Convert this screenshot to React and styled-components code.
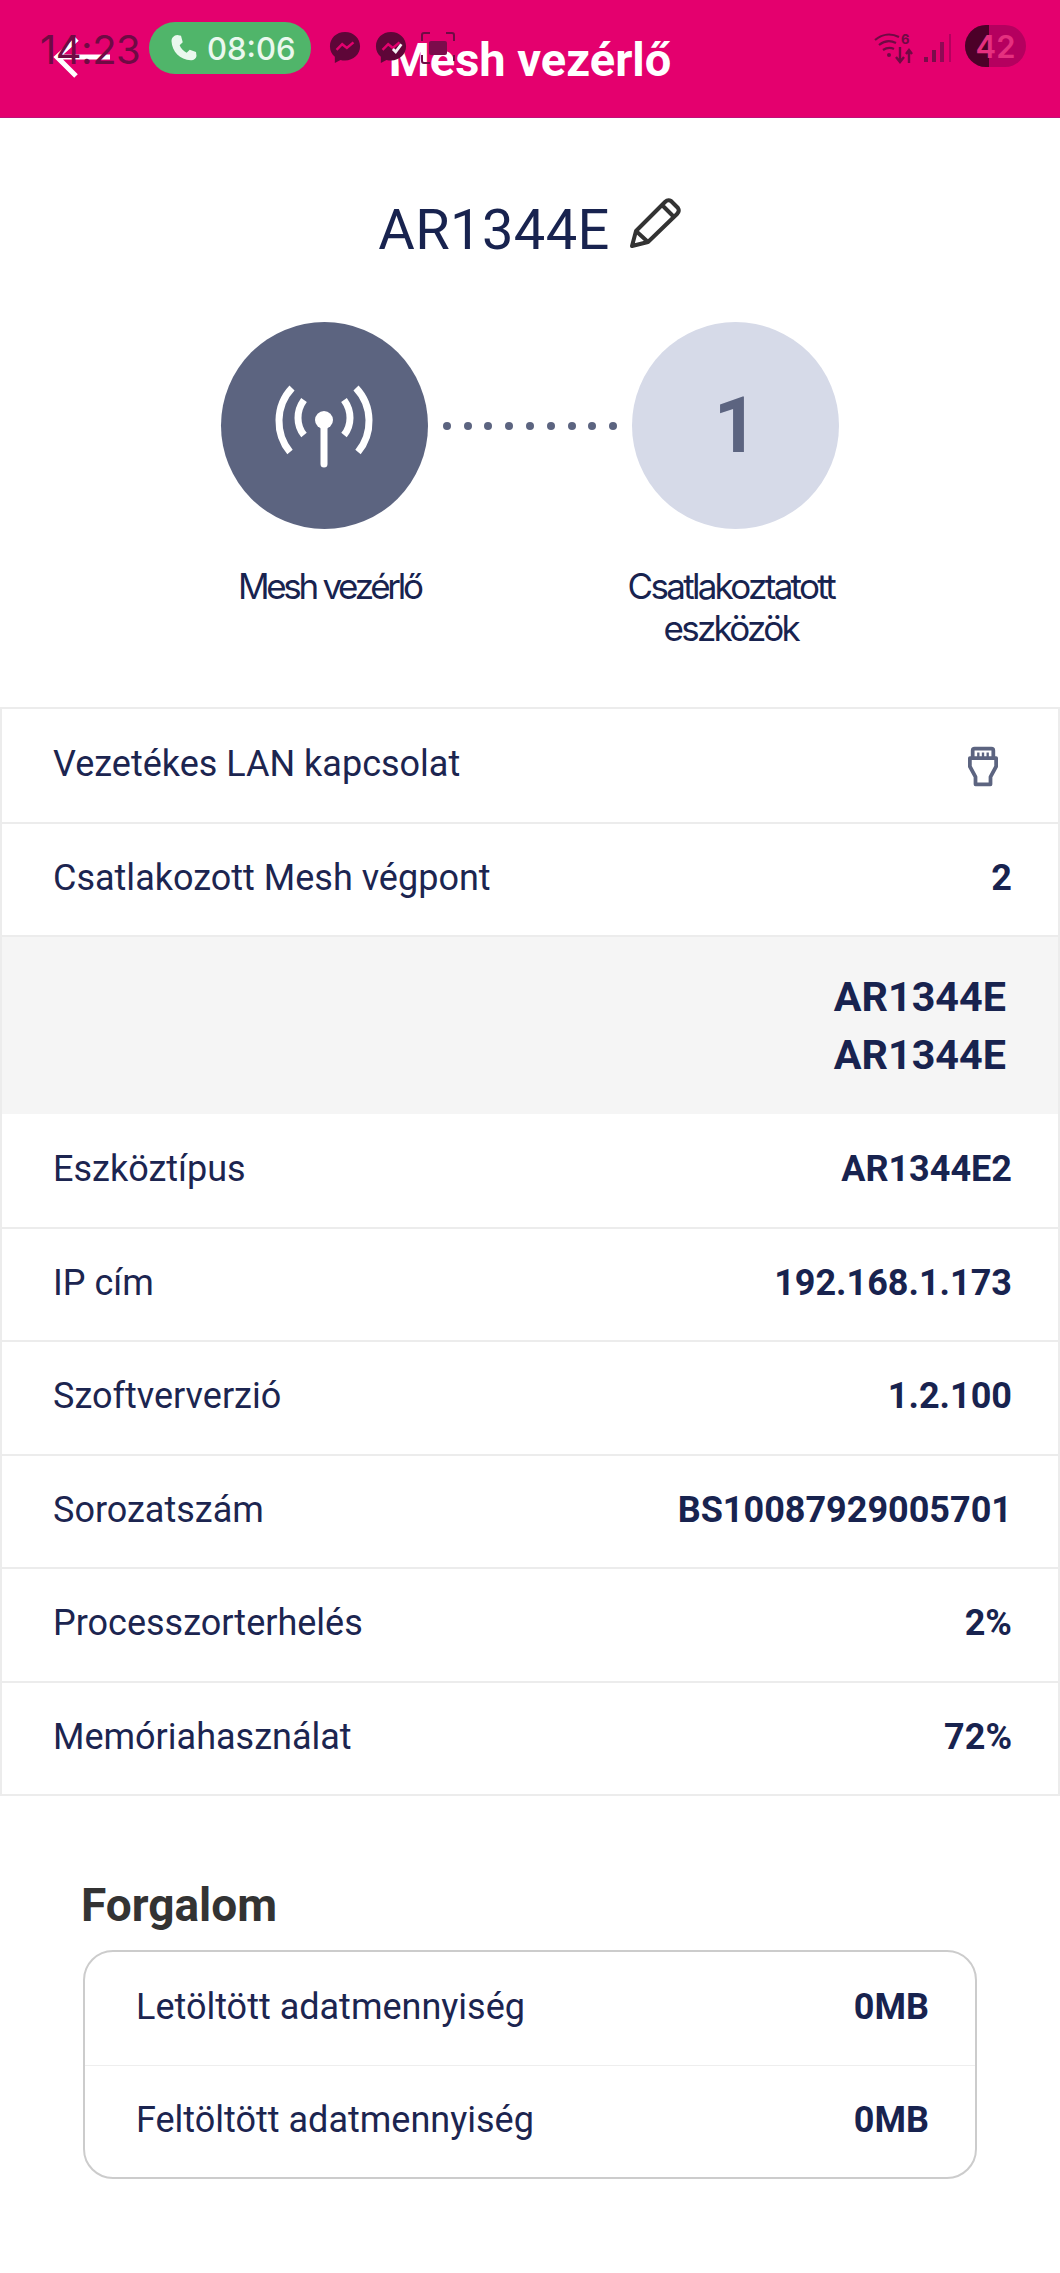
import React from "react";
import styled, { createGlobalStyle } from "styled-components";

const Global = createGlobalStyle`
  html, body { margin: 0; padding: 0; background: #fff; }
  * { box-sizing: border-box; }
  body { font-family: Roboto, "Liberation Sans", sans-serif; }
`;
const Page = styled.div`
  width: 1060px; height: 2273px; background: #fff; overflow: hidden; position: relative;
  color: #18234f;
`;
const Header = styled.header`
  height: 118px; background: #e4006e; position: relative;
  display: flex; align-items: center; justify-content: center;
  border-bottom: 1px solid #c0107a;
`;
const HeaderTitle = styled.h1`
  margin: 0; padding-top: 2px; font-size: 47px; font-weight: 700; color: #fff; line-height: 1;
`;
const BackIcon = styled.svg`
  position: absolute; left: 50px; top: 36px; width: 66px; height: 44px;
`;
const StatusBar = styled.div`
  position: absolute; left: 40px; right: 34px; top: 22px; height: 52px;
  display: flex; align-items: center;
`;
const Clock = styled.span`
  font-family: Inter, sans-serif; font-size: 40px; line-height: 1; color: #6f0a44;
  width: 109px; letter-spacing: -0.5px; margin-top: 3px;
`;
const CallPill = styled.div`
  width: 162px; height: 52px; border-radius: 26px; background: #50b56a;
  display: flex; align-items: center; gap: 8px; padding-left: 20px; color: #eaf8ee;
  font-family: Inter, sans-serif; font-size: 31px; font-weight: 500;
`;
const StatusIcons = styled.div`
  display: flex; align-items: center; margin-left: 18px; gap: 14px;
`;
const StatusRight = styled.div`
  margin-left: auto; display: flex; align-items: center; gap: 10px;
`;
const Battery = styled.div`
  width: 61px; height: 42px; border-radius: 21px; overflow: hidden; position: relative;
  background: #b5005f; margin-left: 3px; margin-top: -4px;
  display: flex; align-items: center; justify-content: center;
  font-family: Inter, sans-serif; font-weight: 600; font-size: 31px; color: #e5307f;
  &::before { content: ""; position: absolute; left: 0; top: 0; bottom: 0; width: 24px; background: #4c0028; }
  span { position: relative; }
`;
const NameRow = styled.div`
  display: flex; justify-content: center; align-items: flex-start; gap: 19px;
  padding: 79px 0 0 1px; height: 204px;
`;
const DeviceName = styled.div`
  font-size: 56px; line-height: 66px; letter-spacing: .4px; color: #18234f;
`;
const Pencil = styled.svg`
  width: 54px; height: 54px; margin-top: -1px;
`;
const Topology = styled.div`
  display: grid; grid-template-columns: 207px 204.5px 207px; justify-content: center;
`;
const Circle = styled.div`
  width: 207px; height: 207px; border-radius: 50%;
  background: ${p => (p.$light ? "#d6dae8" : "#5c6480")};
  display: flex; align-items: center; justify-content: center;
  font-size: 77px; font-weight: 700; color: #5c6480;
`;
const Dots = styled.div`
  display: flex; align-items: center; justify-content: center; gap: 12.8px;
`;
const Dot = styled.i`
  width: 8px; height: 8px; border-radius: 50%; background: #5c6480; display: block;
`;
const Captions = styled.div`
  display: grid; grid-template-columns: 207px 204.5px 207px; justify-content: center;
  margin-top: 36px; height: 142px;
`;
const Caption = styled.div`
  grid-column: ${p => p.$col};
  font-family: Inter, sans-serif; font-size: 35px; line-height: 42px;
  letter-spacing: ${p => p.$tight}px;
  padding: ${p => p.$pad};
  text-align: center; white-space: nowrap; justify-self: center;
`;
const Table = styled.section`
  border: 2px solid #ececec;
`;
const Row = styled.div`
  height: 113.5px; display: flex; align-items: center; justify-content: space-between;
  padding: 0 46px 3px 51px; font-size: 36px;
  &:first-child { height: 112.5px; }
  & + & { border-top: 2px solid #ececec; }
`;
const Label = styled.span`
  color: #1c2550;
`;
const Value = styled.span`
  font-weight: 700; color: #18234f;
`;
const EthernetIcon = styled.svg`
  width: 30px; height: 41px; margin: 5px 14px 0 0;
`;
const GrayRow = styled.div`
  height: 179px; background: #f5f5f5; border-top: 2px solid #ececec;
  display: flex; flex-direction: column; align-items: flex-end; justify-content: center;
  padding-right: 52px; font-size: 41.3px; font-weight: 700; line-height: 58px; color: #18234f;
  & + ${Row} { border-top: 0; height: 112.5px; }
`;
const Section = styled.section`
  padding: 78px 83px 0 83px;
`;
const SectionTitle = styled.h2`
  margin: 0 0 14px -2px; font-size: 46px; line-height: 62px; font-weight: 700; color: #333;
`;
const Card = styled.div`
  border: 2px solid #cccccc; border-radius: 30px; overflow: hidden;
`;
const CardRow = styled(Row)`
  height: 112.5px; padding: 0 46px 3px 51px;
  & + & { border-top: 1px solid #eeeeee; }
`;

const rows1 = [
  ["Eszköztípus", "AR1344E2"],
  ["IP cím", "192.168.1.173"],
  ["Szoftververzió", "1.2.100"],
  ["Sorozatszám", "BS10087929005701"],
  ["Processzorterhelés", "2%"],
  ["Memóriahasználat", "72%"],
];

const Messenger = ({ check }) => (
  <svg width="32" height="34" viewBox="0 0 34 36">
    <path fill="#5e0638" d="M17 1C7.8 1 1 7.6 1 16.2c0 4.6 2 8.6 5.2 11.2V34l6-3.3c1.5.4 3.1.6 4.8.6 9.2 0 16-6.6 16-15.1S26.2 1 17 1z" />
    <path fill="none" stroke="#e4006e" strokeWidth="2.6" d="M8 20l6-6 5 4 7-6" />
    {check && <path fill="none" stroke="#f4f4f4" strokeWidth="3" d="M19 19l3 3 6-8" />}
  </svg>
);

export default function App() {
  return (
    <Page>
      <Global />
      <Header>
        <HeaderTitle>Mesh vezérlő</HeaderTitle>
        <BackIcon viewBox="0 0 66 44">
          <path d="M60 21H8M27 3L7 21l19 19" fill="none" stroke="#fff" strokeWidth="5" />
        </BackIcon>
        <StatusBar>
          <Clock>14:23</Clock>
          <CallPill>
            <svg width="30" height="30" viewBox="0 0 24 24">
              <path fill="#eaf8ee" d="M6.6 1.5l3 .6 1.4 5.3-2.5 2.3c1 2.4 3 4.6 5.6 6l2.5-2.3 5 1.7.4 3.3c-.3 2-2.3 3.6-4.5 3.4C8.7 21.2 2.5 14.8 2 6.5 2 3.7 4 1.7 6.6 1.5z" />
            </svg>
            08:06
          </CallPill>
          <StatusIcons>
            <Messenger />
            <Messenger check />
            <svg width="34" height="32" viewBox="0 0 34 32">
              <path fill="none" stroke="#6f0a44" strokeWidth="2" d="M1 9V3a2 2 0 0 1 2-2h6M25 1h6a2 2 0 0 1 2 2v6M1 23v6a2 2 0 0 0 2 2h6M33 23v6" />
              <rect x="8" y="9" width="18" height="14" rx="2" fill="#7b0c4b" />
            </svg>
          </StatusIcons>
          <StatusRight>
            <svg width="40" height="32" viewBox="0 0 40 32">
              <g fill="none" stroke="#6f0a44" strokeWidth="2.2">
                <path d="M1 8c7-6 16-7 24-3M5 13c5-4 11-5 17-2M9 18c3-2 7-3 11-1" />
              </g>
              <circle cx="15" cy="23" r="2" fill="#6f0a44" />
              <text x="27" y="12" fontFamily="Inter, sans-serif" fontWeight="700" fontSize="13" fill="#6f0a44">6</text>
              <path fill="none" stroke="#6f0a44" strokeWidth="2.4" d="M26 15v14M22 25l4 5 4-5M35 31V19M32 22l3-4 3 4" />
            </svg>
            <svg width="28" height="30" viewBox="0 0 28 30">
              <rect x="0" y="24" width="4" height="5" fill="#7b0c4b" />
              <rect x="8" y="17" width="4" height="12" fill="#7b0c4b" />
              <rect x="16" y="9" width="4" height="20" fill="#8f0a55" />
              <rect x="25" y="1" width="2" height="28" fill="#b5005f" />
            </svg>
            <Battery><span>42</span></Battery>
          </StatusRight>
        </StatusBar>
      </Header>

      <NameRow>
        <DeviceName>AR1344E</DeviceName>
        <Pencil viewBox="0 0 54 54">
          <path fill="none" stroke="#333" strokeWidth="4" strokeLinejoin="round" d="M3 50l4-15L36 6q3-3 6-1l7 7q2 3-1 6L19 46zM7 35l12 11M33 9l12 12" />
        </Pencil>
      </NameRow>

      <Topology>
        <Circle>
          <svg width="100" height="84" viewBox="0 0 100 84">
            <g fill="none" stroke="#fff" strokeWidth="7" strokeLinecap="butt">
              <path d="M18 4C1 22 1 50 16 68M30 16c-8 11-8 25 0 35M82 4c17 18 17 46 2 64M70 16c8 11 8 25 0 35" />
              <path d="M50 38v42" strokeLinecap="round" />
            </g>
            <circle cx="50" cy="36" r="9" fill="#fff" />
          </svg>
        </Circle>
        <Dots>
          {Array.from({ length: 9 }, (_, i) => <Dot key={i} />)}
        </Dots>
        <Circle $light>1</Circle>
      </Topology>
      <Captions>
        <Caption $col={1} $tight={-3.3} $pad="0 0 0 10px">Mesh vezérlő</Caption>
        <Caption $col={3} $tight={-2.7} $pad="0 10px 0 0">Csatlakoztatott<br />eszközök</Caption>
      </Captions>

      <Table>
        <Row>
          <Label>Vezetékes LAN kapcsolat</Label>
          <EthernetIcon viewBox="0 0 32 42">
            <g fill="none" stroke="#5c6480" strokeWidth="4" strokeLinejoin="round">
              <path d="M5 12V4q0-2 2-2h18q2 0 2 2v8" />
              <path d="M2 12h28v9l-6 11v8H8v-8L2 21z" />
            </g>
            <path d="M11 6v5M16 6v5M21 6v5" stroke="#5c6480" strokeWidth="2.5" />
          </EthernetIcon>
        </Row>
        <Row>
          <Label>Csatlakozott Mesh végpont</Label>
          <Value>2</Value>
        </Row>
        <GrayRow>
          <div>AR1344E</div>
          <div>AR1344E</div>
        </GrayRow>
        {rows1.map(([l, v]) => (
          <Row key={l}><Label>{l}</Label><Value>{v}</Value></Row>
        ))}
      </Table>

      <Section>
        <SectionTitle>Forgalom</SectionTitle>
        <Card>
          <CardRow><Label>Letöltött adatmennyiség</Label><Value>0MB</Value></CardRow>
          <CardRow><Label>Feltöltött adatmennyiség</Label><Value>0MB</Value></CardRow>
        </Card>
      </Section>
    </Page>
  );
}
